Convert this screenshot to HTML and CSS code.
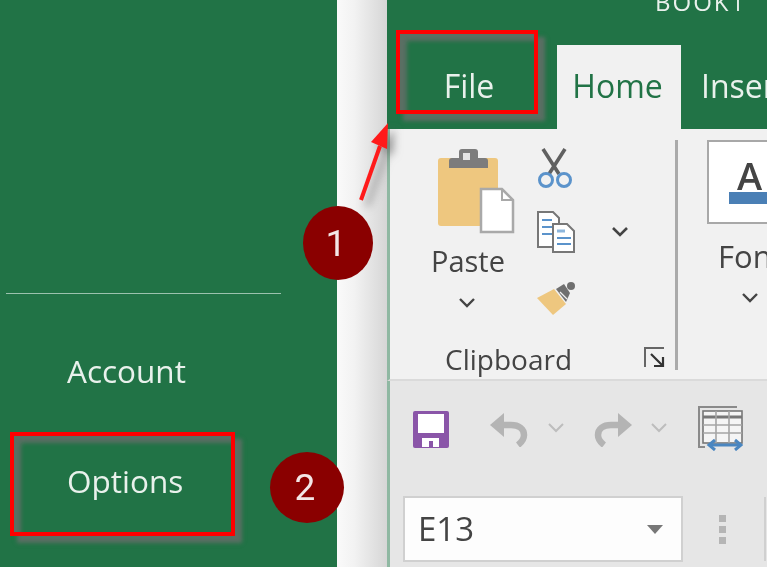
FILE: index.html
```html
<!DOCTYPE html>
<html lang="en">
<head>
<meta charset="utf-8">
<title>Excel options</title>
<link rel="stylesheet" href="styles.css">
</head>
<body>
<div class="page">
  <nav class="backstage">
    <hr class="rule">
    <a class="nav-item nav-account">Account</a>
    <a class="nav-item nav-options">Options</a>
  </nav>
  <div class="spacer"></div>
  <main class="excel">
    <header class="titlebar"><span class="book">BOOK1</span></header>
    <div class="tabs">
      <span class="tab tab-file">File</span>
      <span class="tab tab-home">Home</span>
      <span class="tab tab-insert">Insert</span>
    </div>
    <section class="ribbon">
      <div class="group-clipboard">
        <div class="clip-main">
          <div class="paste">
            <svg class="ic-paste" viewBox="0 0 78 86" width="78" height="86">
              <rect x="1" y="10" width="60" height="68" rx="3" fill="#eec77f"/>
              <path d="M12 20v-7q0-3 3-3h7v-6q0-3 3-3h13q3 0 3 3v6h7q3 0 3 3v7z" fill="#7c7c7c"/>
              <rect x="26" y="5" width="7" height="7" fill="#e4e4e4"/>
              <path d="M44 41h21l11 11v32H44z" fill="#fff" stroke="#a9a9a9" stroke-width="2.5"/>
              <path d="M65 41v11h11" fill="none" stroke="#a9a9a9" stroke-width="2"/>
            </svg>
            <span class="paste-label">Paste</span>
            <svg class="chev chev-paste" viewBox="0 0 16 10" width="16" height="10"><path d="M1 1l7 7 7-7" fill="none" stroke="#444" stroke-width="2.4"/></svg>
          </div>
          <div class="tools">
            <svg viewBox="0 0 38 42" width="38" height="42">
              <path d="M6 1l16 25M28 1L12 26" stroke="#606060" stroke-width="3.6" fill="none"/>
              <circle cx="9" cy="32" r="6.5" fill="none" stroke="#5b93cb" stroke-width="3"/>
              <circle cx="27" cy="32" r="6.5" fill="none" stroke="#5b93cb" stroke-width="3"/>
            </svg>
            <svg class="ic-copy" viewBox="0 0 38 42" width="38" height="42">
              <path d="M1 1h15l6 6v29H1z" fill="#fff" stroke="#777" stroke-width="2"/>
              <path d="M5 9h10M5 16h10M5 23h10" stroke="#5b93cb" stroke-width="2"/>
              <path d="M16 13h14l7 7v21H16z" fill="#fff" stroke="#777" stroke-width="2"/>
              <path d="M20 20h8" stroke="#8db6dc" stroke-width="3"/>
              <path d="M20 27h14M20 33h14" stroke="#5b93cb" stroke-width="2"/>
            </svg>
            <svg class="ic-brush" viewBox="0 0 40 36" width="40" height="36">
              <path d="M0 17l17-9 12 15-13 11z" fill="#eec77f"/>
              <path d="M19 8l8-5 6 9-4 9z" fill="#6f6f6f"/>
              <path d="M23 11l7 7" stroke="#f1f1f1" stroke-width="1.2"/>
              <circle cx="34" cy="5" r="4" fill="#6f6f6f"/>
            </svg>
          </div>
          <svg class="chev chev-copy" viewBox="0 0 16 10" width="16" height="10"><path d="M1 1l7 7 7-7" fill="none" stroke="#444" stroke-width="2.6"/></svg>
        </div>
        <div class="clip-foot">
          <span class="clip-label">Clipboard</span>
          <svg class="launcher" viewBox="0 0 23 23" width="23" height="23">
            <path d="M21 2H2v19" fill="none" stroke="#666" stroke-width="2"/>
            <path d="M8 8l11 11M11 20h9v-9" fill="none" stroke="#333" stroke-width="2.2"/>
          </svg>
        </div>
      </div>
      <div class="divider"></div>
      <div class="group-font">
        <div class="font-box">
          <span class="font-a">A</span>
          <span class="font-bar"></span>
        </div>
        <span class="font-label">Font</span>
        <svg class="chev chev-font" viewBox="0 0 16 10" width="16" height="10"><path d="M1 1l7 7 7-7" fill="none" stroke="#444" stroke-width="2.4"/></svg>
      </div>
    </section>
    <section class="qat">
      <div class="qat-icons">
        <svg class="ic-save" viewBox="0 0 36 37" width="36" height="37">
          <rect width="36" height="37" rx="2" fill="#8a55a8"/>
          <rect x="5" y="3" width="26" height="19" fill="#fff"/>
          <path d="M9 36V27h17v9h-6v-6h-4v6z" fill="#fff"/>
        </svg>
        <svg class="ic-undo" viewBox="0 0 41 34" width="41" height="34">
          <path d="M1 12L15 0v24z" fill="#b4b4b4"/>
          <path d="M12 12h10c8 0 13 4 13 10 0 4-2 7-6 10" fill="none" stroke="#b4b4b4" stroke-width="6.5"/>
        </svg>
        <svg class="chev chev-qat" viewBox="0 0 16 10" width="16" height="10"><path d="M1 1l7 7 7-7" fill="none" stroke="#bdbdbd" stroke-width="2"/></svg>
        <svg class="ic-redo" viewBox="0 0 41 34" width="41" height="34">
          <path d="M40 12L26 0v24z" fill="#b4b4b4"/>
          <path d="M29 12H19C11 12 6 16 6 22c0 4 2 7 6 10" fill="none" stroke="#b4b4b4" stroke-width="6.5"/>
        </svg>
        <svg class="chev chev-qat" viewBox="0 0 16 10" width="16" height="10"><path d="M1 1l7 7 7-7" fill="none" stroke="#bdbdbd" stroke-width="2"/></svg>
        <svg class="ic-table" viewBox="0 0 46 46" width="46" height="46">
          <path d="M40 2H2v40h6" fill="none" stroke="#8a8a8a" stroke-width="2"/>
          <rect x="6" y="6" width="39" height="32" fill="#f5f5f5" stroke="#777" stroke-width="1.6"/>
          <path d="M6 12h39" stroke="#777" stroke-width="3"/>
          <path d="M6 20h39M6 28h39M19 6v32M32 6v32" stroke="#a5a5a5" stroke-width="1.6"/>
          <path d="M14 40h28" stroke="#4a86c0" stroke-width="3"/>
          <path d="M18 35l-6 5 6 5M38 35l6 5-6 5" fill="none" stroke="#4a86c0" stroke-width="3"/>
        </svg>
      </div>
      <div class="formula-row">
        <div class="namebox">
          <span class="cell-ref">E13</span>
          <span class="tri"></span>
        </div>
        <div class="dots"><i></i><i></i><i></i></div>
        <div class="formula-edge"></div>
      </div>
    </section>
  </main>

  <div class="mark mark-file"></div>
  <div class="mark mark-options"></div>
  <svg class="arrow" viewBox="0 0 36 84" width="36" height="84">
    <path d="M4 79l19-54" stroke="#ff1a1a" stroke-width="4" fill="none"/>
    <path d="M31 2L14 21l16 7z" fill="#ff1a1a"/>
  </svg>
  <div class="step step-1">1</div>
  <div class="step step-2">2</div>
</div>
</body>
</html>
```
FILE: styles.css
```css
* { box-sizing: border-box; }
html, body { margin: 0; padding: 0; }
body { width: 767px; height: 567px; overflow: hidden; background: #e6e6e6; }

.page {
  position: relative;
  display: flex;
  width: 767px;
  height: 567px;
  overflow: hidden;
  font-family: "Open Sans", "Noto Sans", sans-serif;
  filter: blur(0.7px);
}

/* backstage */
.backstage {
  flex: 0 0 337px;
  background: #217346;
  padding-top: 293px;
  color: #e9f1ec;
}
.rule {
  width: 275px;
  height: 1px;
  margin: 0 0 0 6px;
  border: 0;
  background: #9cc2ae;
}
.nav-item {
  display: block;
  padding-left: 67px;
  font-size: 31.5px;
  line-height: 42px;
}
.nav-account { margin-top: 56px; }
.nav-options { margin-top: 68px; }

.spacer {
  flex: 0 0 50px;
  background: linear-gradient(90deg, #fafafa 0%, #f2f2f2 35%, #d6d6d6 100%);
}

/* excel */
.excel {
  flex: 1 1 auto;
  min-width: 0;
  overflow: hidden;
  display: flex;
  flex-direction: column;
  background: #217346;
}
.titlebar { height: 45px; overflow: hidden; padding-left: 268px; }
.book {
  display: block;
  margin-top: -14px;
  font-size: 24px;
  line-height: 32px;
  color: #e9f1ec;
  letter-spacing: 2px;
}
.tabs { display: flex; height: 84px; color: #e9f1ec; font-size: 32px; line-height: 82px; }
.tab { flex: none; text-align: center; white-space: nowrap; }
.tab-file { width: 170px; padding-right: 6px; }
.tab-home { width: 124px; padding-right: 3px; background: #f1f1f1; color: #217346; }
.tab-insert { padding-left: 20px; }

/* ribbon */
.ribbon {
  height: 252px;
  display: flex;
  background: #f1f1f1;
  border-left: 3px solid #8fb8a2;
  border-bottom: 2px solid #dadada;
  color: #444;
}
.group-clipboard { flex: none; width: 285px; padding: 19px 0 0 47px; display: flex; flex-direction: column; }
.clip-main { display: flex; height: 196px; }
.paste { width: 78px; display: flex; flex-direction: column; align-items: center; }
.ic-paste { flex: none; }
.paste-label { font-size: 29px; line-height: 40px; margin-top: 7px; margin-left: -16px; }
.chev-paste { margin-top: 17px; margin-left: -18px; }
.chev { flex: none; display: block; }
.tools { width: 40px; margin-left: 22px; display: flex; flex-direction: column; }
.ic-copy { margin-top: 21px; }
.ic-brush { margin-top: 28px; }
.chev-copy { margin: 79px 0 0 35px; }
.clip-foot { display: flex; align-items: center; height: 30px; padding-left: 8px; }
.clip-label { flex: none; font-size: 28px; line-height: 30px; width: 198px; white-space: nowrap; }
.launcher { flex: none; margin-top: -3px; }

.divider { flex: none; width: 3px; height: 230px; margin-top: 11px; background: #aaa; }

.group-font { flex: none; padding: 11px 0 0 29px; display: flex; flex-direction: column; }
.font-box {
  width: 100px;
  height: 84px;
  background: #fff;
  border: 2px solid #a8a8a8;
  padding-left: 20px;
  display: flex;
  flex-direction: column;
}
.font-a { font-size: 38px; line-height: 40px; margin: 13px 0 0 8px; font-weight: 600; color: #444; }
.font-bar { width: 70px; height: 12px; margin-top: -3px; background: #4a7fb5; }
.font-label { font-size: 31px; line-height: 42px; margin-top: 11px; padding-left: 11px; white-space: nowrap; width: 60px; overflow: hidden; }
.chev-font { margin: 16px 0 0 35px; }

/* quick access */
.qat {
  flex: 1 1 auto;
  background: #e6e6e6;
  border-left: 3px solid #8fb8a2;
  padding: 24px 0 0 23px;
}
.qat-icons { display: flex; align-items: center; height: 46px; }
.ic-save { margin-top: 3px; }
.ic-undo { margin-left: 40px; margin-top: 3px; }
.chev-qat { margin: 0 0 0 18px; }
.ic-redo { margin-left: 28px; margin-top: 3px; }
.ic-table { margin-left: 30px; }
.formula-row { display: flex; align-items: center; margin: 45px 0 0 -10px; }
.namebox {
  flex: none;
  width: 280px;
  height: 66px;
  background: #fdfdfd;
  border: 2px solid #d0d0d0;
  display: flex;
  align-items: center;
  justify-content: space-between;
  padding: 0 18px 0 13px;
}
.cell-ref { font-size: 33px; line-height: 42px; color: #444; }
.tri { width: 0; height: 0; border: 8px solid transparent; border-top: 9px solid #777; border-bottom: 0; }
.dots { flex: none; display: flex; flex-direction: column; gap: 4px; margin-left: 36px; }
.dots i { display: block; width: 7px; height: 7px; background: #b5b5b5; }
.formula-edge { flex: none; width: 2px; height: 64px; margin-left: 38px; background: #d0d0d0; }

/* annotations */
.mark {
  position: absolute;
  border: 4px solid #f00;
  box-shadow: 7px 7px 4px rgba(110,110,110,.75), inset 7px 7px 4px rgba(110,110,110,.75);
}
.mark-file { left: 396px; top: 30px; width: 142px; height: 84px; }
.mark-options { left: 10px; top: 432px; width: 225px; height: 104px; }
.arrow { position: absolute; left: 357px; top: 121px; filter: drop-shadow(6px 6px 4px rgba(90,90,90,.6)); }
.step {
  position: absolute;
  display: flex;
  align-items: center;
  justify-content: center;
  padding-right: 4px;
  border-radius: 50%;
  background: #8a0000;
  color: #f3e6e6;
  font-family: Roboto, "Open Sans", sans-serif;
  font-size: 37px;
}
.step-1 { left: 303px; top: 206px; width: 70px; height: 74px; }
.step-2 { left: 270px; top: 452px; width: 74px; height: 71px; }
```
